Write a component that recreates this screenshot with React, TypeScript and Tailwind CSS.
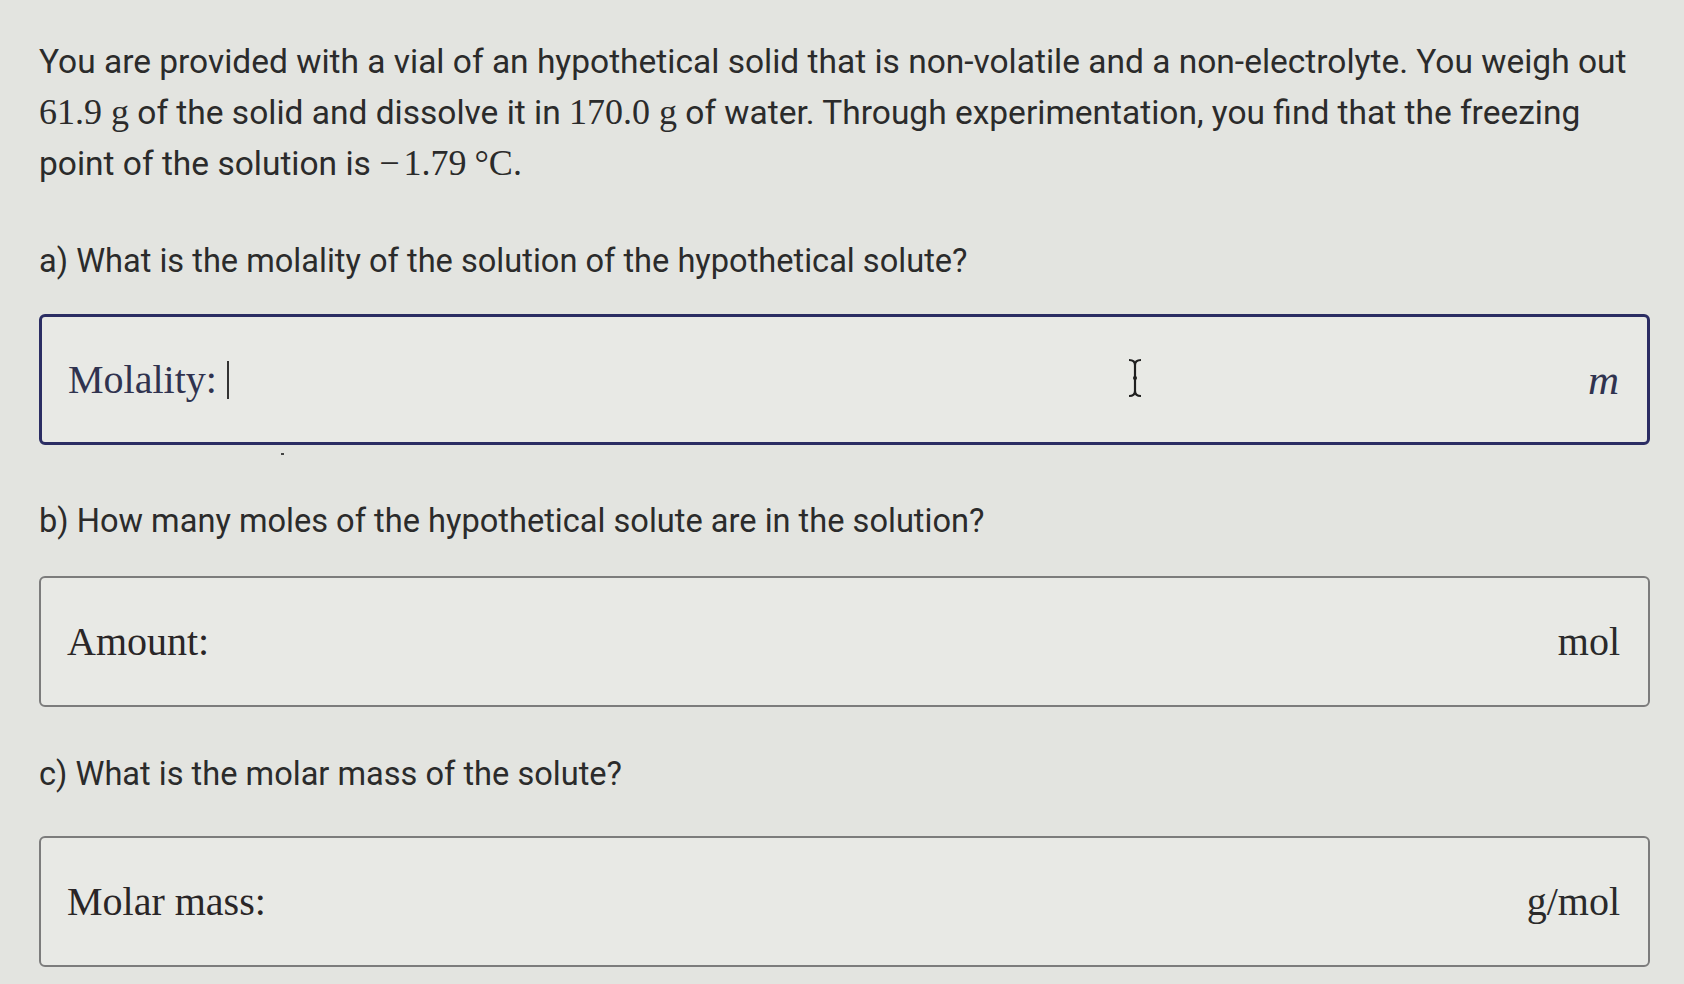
import React from "react";

const sans = { fontFamily: "Roboto, 'Liberation Sans', sans-serif" };

function M({ children }: { children: React.ReactNode }) {
  return <span className="font-['Liberation_Serif',serif] text-[36px]">{children}</span>;
}

function IBeam() {
  return (
    <svg width="16" height="40" viewBox="0 0 16 40" className="absolute left-[1127px] top-[358px]">
      <path d="M2 2 Q8 2 8 7 Q8 2 14 2" fill="none" stroke="#1f1f1f" strokeWidth="2.2" />
      <path d="M8 7 L8 33" stroke="#1f1f1f" strokeWidth="2.2" />
      <path d="M2 38 Q8 38 8 33 Q8 38 14 38" fill="none" stroke="#1f1f1f" strokeWidth="2.2" />
      <circle cx="8" cy="20" r="2" fill="#1f1f1f" />
    </svg>
  );
}

function AnswerBox({
  label,
  unit,
  active,
  italicUnit,
  className,
}: {
  label: string;
  unit: string;
  active?: boolean;
  italicUnit?: boolean;
  className?: string;
}) {
  return (
    <div
      className={
        "flex h-[131px] items-center justify-between rounded-[6px] bg-[#e8e9e5] pl-[26px] pr-[28px] " +
        (active ? "border-[3px] border-[#2b2d63] " : "border-2 border-[#7c7c7c] ") +
        (className ?? "")
      }
    >
      <div className="flex items-center">
        <span
          className={
            "font-['Liberation_Serif',serif] text-[40px] leading-none " +
            (active ? "text-[#30334f]" : "text-[#2a2627]")
          }
        >
          {label}
        </span>
        {active && <span className="ml-[10px] h-[38px] w-[2px] bg-[#333]" />}
      </div>
      <span
        className={
          "font-['Liberation_Serif',serif] leading-none " +
          (italicUnit ? "text-[43px] italic text-[#30334f]" : "text-[40px] text-[#2a2a2a]")
        }
      >
        {unit}
      </span>
    </div>
  );
}

export default function App() {
  return (
    <div className="relative min-h-[984px] w-full overflow-hidden bg-[#e3e4e0] text-[#2b2b2b]" style={sans}>
      <div className="pl-[39px] pr-[34px] pt-[36px]">
        <div className="text-[33.5px] leading-[51px]">
          <div className="whitespace-nowrap">
            You are provided with a vial of an hypothetical solid that is non-volatile and a non-electrolyte. You weigh out
          </div>
          <div className="whitespace-nowrap">
            <M>61.9 g</M> of the solid and dissolve it in <M>170.0 g</M> of water. Through experimentation, you find that the freezing
          </div>
          <div className="whitespace-nowrap">
            point of the solution is <M>−<span className="ml-[4px]">1.79</span><span className="ml-[8px]">°C.</span></M>
          </div>
        </div>

        <div className="mt-[48px] text-[32.6px] leading-[49px]">a) What is the molality of the solution of the hypothetical solute?</div>
        <AnswerBox className="mt-[28px]" label="Molality:" unit="m" active italicUnit />

        <div className="mt-[52px] text-[32.6px] leading-[49px]">b) How many moles of the hypothetical solute are in the solution?</div>
        <AnswerBox className="mt-[30px]" label="Amount:" unit="mol" />

        <div className="mt-[43px] text-[32.6px] leading-[49px]">c) What is the molar mass of the solute?</div>
        <AnswerBox className="mt-[37px]" label="Molar mass:" unit="g/mol" />
      </div>

      <IBeam />
      <span className="absolute left-[281px] top-[453px] h-[2px] w-[3px] bg-[#444]" />
    </div>
  );
}
